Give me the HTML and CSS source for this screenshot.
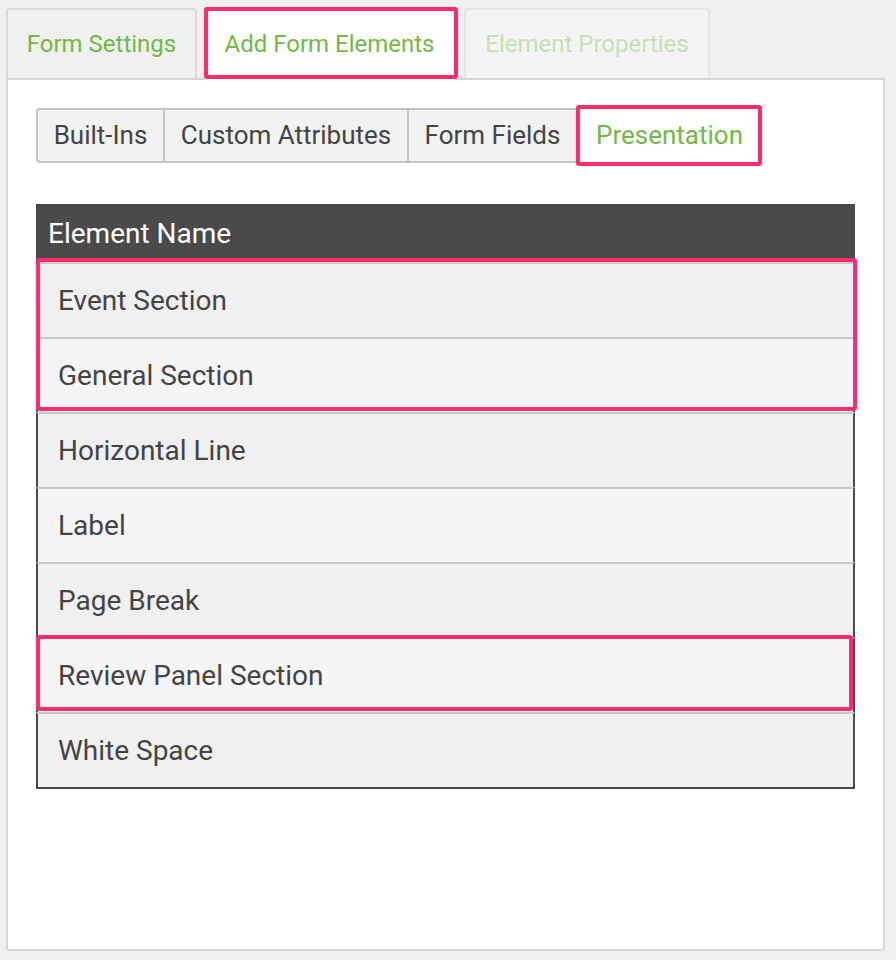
FILE: index.html
```html
<!DOCTYPE html>
<html>
<head>
<meta charset="utf-8">
<link rel="stylesheet" href="styles.css">
</head>
<body>
<div class="page">
  <div class="tabs">
    <div class="tab">Form Settings</div>
    <div class="tab active hl-wrap"><span>Add Form Elements</span><i class="hl hl-tab"></i></div>
    <div class="tab disabled">Element Properties</div>
  </div>
  <div class="panel">
    <div class="subtabs">
      <div class="group">
        <div class="sub">Built-Ins</div>
        <div class="sub">Custom Attributes</div>
        <div class="sub">Form Fields</div>
      </div>
      <div class="sub current hl-wrap">Presentation<i class="hl hl-sub"></i></div>
    </div>
    <div class="table">
      <div class="thead">Element Name</div>
      <div class="hl-wrap">
        <div class="row odd">Event Section</div>
        <div class="row even">General Section</div>
        <i class="hl hl-rows"></i>
      </div>
      <div class="row odd">Horizontal Line</div>
      <div class="row even">Label</div>
      <div class="row odd">Page Break</div>
      <div class="hl-wrap">
        <div class="row even">Review Panel Section</div>
        <i class="hl hl-row"></i>
      </div>
      <div class="row odd last">White Space</div>
    </div>
  </div>
</div>
</body>
</html>
```

FILE: styles.css
```css
* { box-sizing: border-box; }
html, body { margin: 0; padding: 0; }
body {
  background: #f0f0f0;
  font-family: Roboto, "Liberation Sans", sans-serif;
  width: 896px;
  height: 960px;
  overflow: hidden;
}
.page { padding: 8px 0 0 6px; }
.tabs { display: flex; height: 70px; }
.tab {
  height: 70px;
  border: 2px solid #dadada;
  border-bottom: none;
  border-radius: 4px 4px 0 0;
  background: #f0f0f0;
  color: #72b944;
  font-size: 24px;
  display: flex;
  align-items: center;
  justify-content: center;
}
.tab:nth-child(1) { width: 191px; }
.tab.active {
  width: 249px;
  margin-left: 8px;
  background: #fff;
  border-color: #fff;
  position: relative;
  z-index: 1;
  height: 72px;
  margin-bottom: -2px;
  padding-bottom: 2px;
}
.tab.disabled {
  width: 246px;
  margin-left: 10px;
  background: #f4f4f4;
  color: #c7e0b6;
  border-color: #e6e6e6;
}
.hl-wrap { position: relative; }
.hl {
  position: absolute;
  border: 4px solid #ff2d6e;
  border-radius: 3px;
  pointer-events: none;
}
.hl-tab { left: -3px; top: -3px; width: 254px; height: 72px; }
.panel {
  width: 879px;
  height: 873px;
  background: #fff;
  border: 2px solid #d6d6d6;
  border-radius: 0 0 3px 3px;
  padding: 26px 0 0 28px;
}
.subtabs { display: flex; align-items: center; height: 59px; }
.group {
  display: flex;
  height: 55px;
  border: 2px solid #c4c4c4;
  border-right: none;
  border-radius: 4px 0 0 4px;
  background: #f2f2f2;
}
.sub {
  display: flex;
  align-items: center;
  justify-content: center;
  font-size: 26px;
  color: #444;
  border-right: 2px solid #c4c4c4;
  height: 51px;
  padding-bottom: 2px;
}
.sub:nth-child(1) { width: 127px; }
.sub:nth-child(2) { width: 244px; }
.sub:nth-child(3) { width: 169px; }
.sub.current {
  color: #72b944;
  background: #fff;
  border: none;
  width: 185px;
  height: 59px;
  justify-content: center;
  margin-left: -1px;
}
.hl-sub { left: -1px; top: -1px; width: 186px; height: 61px; }
.table {
  margin-top: 39px;
  width: 819px;
}
.thead {
  height: 58px;
  background: #4a4a4a;
  color: #fff;
  font-size: 28px;
  display: flex;
  align-items: center;
  padding: 0 0 0 12px;
}
.row {
  height: 75px;
  font-size: 28px;
  color: #444;
  display: flex;
  align-items: center;
  padding-left: 20px;
  border-left: 2px solid #4a4a4a;
  border-right: 2px solid #4a4a4a;
  border-top: 2px solid #c8c8c8;
}
.row.odd { background: #f0f0f0; }
.row.even { background: #f5f5f5; }
.row.last { border-bottom: 2px solid #4a4a4a; height: 77px; }
.hl-rows { left: 0; top: -4px; width: 821px; height: 153px; }
.hl-row { left: 0; top: -2px; width: 817px; height: 76px; }
```
